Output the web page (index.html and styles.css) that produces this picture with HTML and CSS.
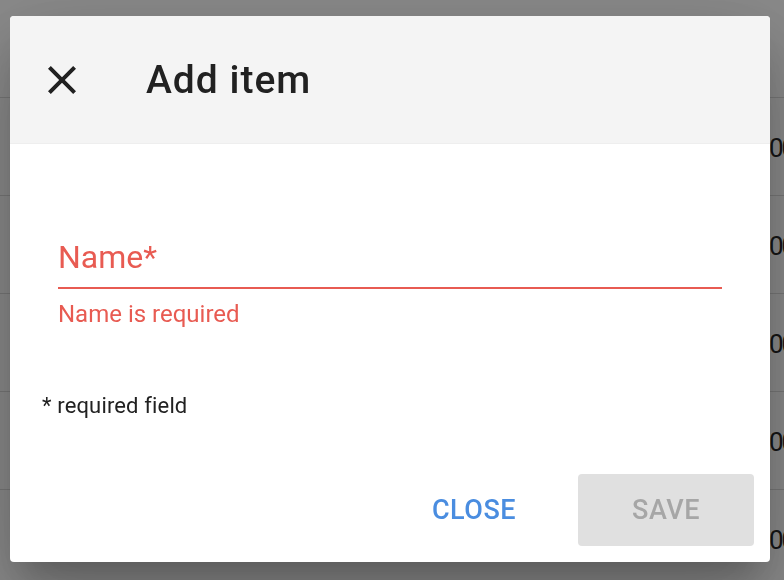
FILE: index.html
```html
<!DOCTYPE html>
<html>
<head>
<meta charset="utf-8">
<link rel="stylesheet" href="styles.css">
</head>
<body>
<div class="page">
  <div class="row"><span class="cell"></span><span class="num"></span></div>
  <div class="row"><span class="cell"></span><span class="num">00</span></div>
  <div class="row"><span class="cell"></span><span class="num">00</span></div>
  <div class="row"><span class="cell"></span><span class="num">00</span></div>
  <div class="row"><span class="cell"></span><span class="num">00</span></div>
  <div class="row"><span class="cell"></span><span class="num">00</span></div>
</div>
<div class="overlay"></div>
<div class="dialog">
  <div class="dialog-header">
    <svg class="close-icon" viewBox="0 0 24 24" width="48" height="48"><path d="M19 6.41L17.59 5 12 10.59 6.41 5 5 6.41 10.59 12 5 17.59 6.41 19 12 13.41 17.59 19 19 17.59 13.41 12z" fill="#212121"/></svg>
    <h2 class="title">Add item</h2>
  </div>
  <div class="dialog-body">
    <div class="field">
      <div class="field-input">
        <span class="field-label">Name*</span>
      </div>
      <div class="helper">Name is required</div>
    </div>
    <div class="note">* required field</div>
  </div>
  <div class="dialog-actions">
    <button class="btn btn-text">Close</button>
    <button class="btn btn-disabled" disabled>Save</button>
  </div>
</div>
</body>
</html>
```

FILE: styles.css
```css
html, body {
  margin: 0;
  padding: 0;
  background: #ffffff;
  font-family: Roboto, "Liberation Sans", sans-serif;
  overflow: hidden;
}

.page {
  width: 784px;
  height: 580px;
}

.row {
  height: 98px;
  box-sizing: border-box;
  border-bottom: 1px solid #dcdcdc;
  display: grid;
  grid-template-columns: 769px auto;
  align-items: center;
  font-size: 26px;
  color: rgba(0, 0, 0, 0.87);
  white-space: nowrap;
}

.num {
  letter-spacing: -2px;
  padding-top: 2px;
}

.overlay {
  position: fixed;
  inset: 0;
  background: rgba(0, 0, 0, 0.46);
}

.dialog {
  position: fixed;
  left: 10px;
  top: 16px;
  width: 760px;
  height: 546px;
  background: #ffffff;
  border-radius: 4px;
  overflow: hidden;
  display: flex;
  flex-direction: column;
  box-shadow: 0 22px 30px -14px rgba(0, 0, 0, 0.2),
              0 48px 76px 6px rgba(0, 0, 0, 0.14),
              0 18px 92px 16px rgba(0, 0, 0, 0.12);
}

.dialog-header {
  height: 128px;
  box-sizing: border-box;
  background: #f4f4f4;
  border-bottom: 1px solid #eeeeee;
  display: flex;
  align-items: center;
  padding-left: 28px;
}

.close-icon {
  display: block;
  flex: none;
}

.title {
  margin: 0 0 0 60px;
  font-size: 39px;
  font-weight: 500;
  color: #212121;
  letter-spacing: 1px;
  line-height: 48px;
}

.dialog-body {
  flex: 1;
  padding: 93px 48px 0 32px;
}

.field {
  padding-left: 16px;
}

.field-input {
  border-bottom: 2px solid #e85b52;
  padding-bottom: 10px;
}

.field-label {
  display: block;
  font-size: 32px;
  line-height: 40px;
  color: #e85b52;
}

.helper {
  margin-top: 9px;
  font-size: 24px;
  line-height: 32px;
  color: #e85b52;
}

.note {
  margin-top: 61px;
  font-size: 22px;
  line-height: 30px;
  letter-spacing: 0.15px;
  color: #212121;
}

.dialog-actions {
  display: flex;
  justify-content: flex-end;
  gap: 16px;
  padding: 16px;
}

.btn {
  min-width: 176px;
  height: 72px;
  border: none;
  border-radius: 4px;
  font-family: Roboto, "Liberation Sans", sans-serif;
  font-size: 27px;
  font-weight: 500;
  letter-spacing: 0.5px;
  text-transform: uppercase;
  padding: 0 16px;
}

.btn-text {
  background: transparent;
  color: #4a8de0;
}

.btn-disabled {
  background: #e0e0e0;
  color: #a6a6a6;
}
```
